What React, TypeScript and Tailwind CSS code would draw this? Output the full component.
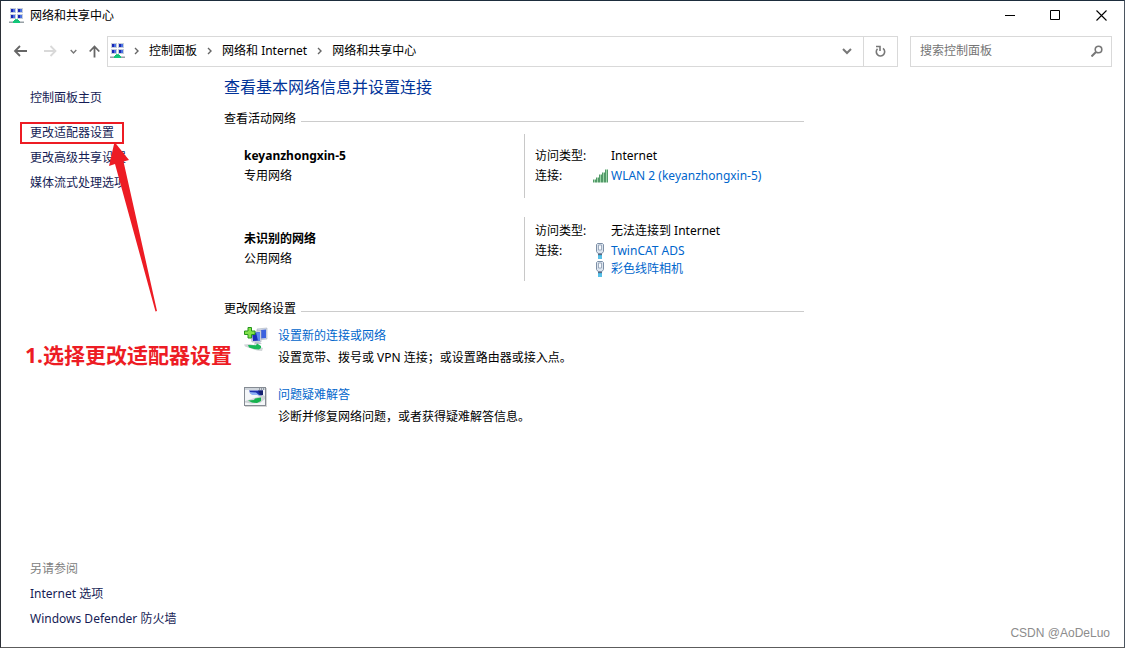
import type { ReactNode } from "react";

const NetworkIcon = () => {
  const screens = [
    [1, 0],
    [8, 0],
    [1, 6],
    [8, 6],
  ];

  return (
    <svg width="16" height="16" viewBox="0 0 16 16" className="shrink-0" shapeRendering="crispEdges">
      {screens.map(([x, y]) => (
        <g key={`${x}-${y}`}>
          <rect x={x} y={y} width="6" height="5" fill="#c6cedb" />
          <rect x={x + 1} y={y + 1} width="4" height="3" fill="#4a72e2" />
          <rect x={x + 1} y={y + 1} width="2" height="3" fill="#1a27b4" />
        </g>
      ))}
      <rect x="0" y="13" width="15" height="1" fill="#c9ced1" />
      <rect x="0" y="14" width="15" height="1" fill="#98a1a6" />
      <rect x="6" y="11" width="3" height="2" fill="#2fd48a" />
      <rect x="5" y="12" width="5" height="1" fill="#19b873" />
      <rect x="4" y="13" width="7" height="2" fill="#12c97b" />
    </svg>
  );
};

const SignalIcon = () => (
  <svg width="16" height="14" viewBox="0 0 16 14">
    <defs>
      <linearGradient id="bar" x1="0" x2="1" y1="0" y2="0">
        <stop offset="0" stopColor="#2f7a4a" />
        <stop offset="0.5" stopColor="#9ad6a6" />
        <stop offset="1" stopColor="#2f7a4a" />
      </linearGradient>
    </defs>
    {[3, 5, 8, 10, 13].map((h, i) => (
      <rect key={h} x={i * 3 + 1} y={13.5 - h} width="3" height={h} fill="url(#bar)" />
    ))}
  </svg>
);

const PlugIcon = () => (
  <svg width="10" height="16" viewBox="0 0 10 16">
    <path d="M2.500.500h5l1 1v7l-1.500 2H3l-1.500-2v-7z" fill="#dbe4ee" stroke="#7d8fa6" />
    <path d="M3.500 2h3v5h-3z" fill="#f7fafd" stroke="#8b9bb0" strokeWidth="0.8" />
    <path d="M3 11h4v1.500H3z" fill="#566a84" />
    <path d="M4 12v4M6 12v4" stroke="#2fb1e2" strokeWidth="1.6" />
  </svg>
);

const NewConnectionIcon = () => (
  <svg width="24" height="24" viewBox="0 0 24 24" className="shrink-0">
    <path d="M13 2l10-1v11l-9 1z" fill="#d3d9e3" stroke="#aab3c2" strokeWidth="0.6" />
    <path d="M17 3l5-.5v8.500l-5 .6z" fill="#3b62df" />
    <path d="M6 5l11-1.500v11.500L8 15z" fill="#d9dee8" stroke="#a4adbd" strokeWidth="0.6" />
    <path d="M8 6l8-1v8.500l-7 .6z" fill="#1b2cba" />
    <path d="M12 5.500l4-.5v8.500l-2 .2z" fill="#5b86f0" />
    <path d="M11 15h4l3 2-8 .5z" fill="#bcc3cd" />
    <path d="M0 17.500l6-.5 13 4-1 3-5-.5L1 19.500z" fill="#d1d5d8" />
    <path d="M4 18l8 .2 1-1.700 4 2.500v2l-2 1.500-5-.5-5-1.500z" fill="#18b857" />
    <path d="M4 .5h3.500V4H11v3.500H7.500V11H4V7.500H.5V4H4z" fill="#83e04a" stroke="#25961d" />
  </svg>
);

const TroubleshootIcon = () => (
  <svg width="24" height="22" viewBox="0 0 24 22" className="shrink-0">
    <rect x="1" y="2" width="22" height="19" fill="#d5d5d5" />
    <rect x="0.5" y="1.500" width="21" height="18" fill="#f4f6f8" stroke="#858b93" />
    <rect x="1" y="2" width="20" height="2" fill="#cfd5dc" />
    <path d="M15 3h1M17 3h1M19 3h1" stroke="#56606d" />
    <path d="M5 4.500h14v4.500l-3 .5-9-1.500z" fill="#1c2fae" />
    <path d="M14 4.500h5V9l-2 .5z" fill="#15206d" />
    <path d="M5 6l7 .5 3 2.500H8z" fill="#8fb0f5" />
    <path d="M1 15l8-2.500 10-3.500 2 1v3l-5 4-9 .5-6-1z" fill="#cdd3d6" />
    <path d="M4 14.500l6-.5 1-1.500 6-1v3.500l-4 2-5-.5z" fill="#15b24d" />
  </svg>
);

const CrumbArrow = () => (
  <svg width="6" height="8" viewBox="0 0 6 8" fill="none" stroke="#666" strokeWidth="1.4">
    <path d="M1 1l3 3-3 3" />
  </svg>
);

const DownArrow = ({ size }: { size: number }) => (
  <svg width={size} height={size} viewBox="0 0 10 10" fill="none" stroke="#777" strokeWidth="2">
    <path d="M1 3l4 4 4-4" />
  </svg>
);

const TitleBar = () => (
  <header className="flex h-[29px] items-center pl-2">
    <NetworkIcon />
    <h1 className="ml-[5px] flex-1">网络和共享中心</h1>
    <button aria-label="最小化" className="flex h-full w-[45px] items-center justify-center">
      <svg width="11" height="11" stroke="#000">
        <path d="M0 5.500h10" />
      </svg>
    </button>
    <button aria-label="最大化" className="flex h-full w-[45px] items-center justify-center">
      <svg width="11" height="11" fill="none" stroke="#000">
        <path d="M.5.500h9v9h-9z" />
      </svg>
    </button>
    <button aria-label="关闭" className="flex h-full w-[46px] items-center justify-center">
      <svg width="11" height="11" stroke="#000" strokeWidth="1.1">
        <path d="M.5.500l10 10M10.500.500l-10 10" />
      </svg>
    </button>
  </header>
);

const NavBar = () => (
  <nav className="flex h-[42px] items-center pr-3 pl-3">
    <button aria-label="后退" className="w-[14px]">
      <svg width="14" height="12" fill="none" stroke="#666" strokeWidth="1.8">
        <path d="M14 6H2M7 1L2 6l5 5" />
      </svg>
    </button>
    <button aria-label="前进" className="ml-4 w-[14px]">
      <svg width="14" height="12" fill="none" stroke="#d9d9d9" strokeWidth="1.8">
        <path d="M1 6h11.500M7.500 1l5 5-5 5" />
      </svg>
    </button>
    <button aria-label="最近位置" className="ml-[13px] w-[7px]">
      <DownArrow size={7} />
    </button>
    <button aria-label="向上" className="ml-3 w-[12px]">
      <svg width="12" height="13" fill="none" stroke="#666" strokeWidth="1.8">
        <path d="M5.500 12.500V2M.700 6.500l4.800-5 4.800 5" />
      </svg>
    </button>

    <div className="ml-[6px] flex h-[31px] flex-1 items-center border border-[#d9d9d9] pl-[2px]">
      <NetworkIcon />
      <ol className="ml-2 flex flex-1 items-center">
        {["控制面板", "网络和 Internet", "网络和共享中心"].map((crumb) => (
          <li key={crumb} className="mr-[10px] flex items-center gap-[9px]">
            <CrumbArrow />
            <a href="#" className="text-black">
              {crumb}
            </a>
          </li>
        ))}
      </ol>
      <button aria-label="以前的位置" className="flex h-full w-[33px] items-center justify-center">
        <DownArrow size={10} />
      </button>
      <button
        aria-label="刷新"
        className="flex h-full w-[34px] items-center justify-center border-l border-[#d9d9d9]"
      >
        <svg width="11" height="12" fill="none" stroke="#777" strokeWidth="1.6">
          <path d="M8 3.400a4.200 4.200 0 1 1-5.500.4" />
          <path d="M1 1.500h4V6" />
        </svg>
      </button>
    </div>

    <label className="ml-3 flex h-[31px] w-[202px] items-center border border-[#d9d9d9] pr-2 pl-[9px]">
      <input
        type="text"
        aria-label="搜索控制面板"
        placeholder="搜索控制面板"
        className="min-w-0 flex-1 outline-none placeholder:text-[#757575]"
      />
      <svg width="12" height="12" fill="none" stroke="#777" strokeWidth="1.6">
        <circle cx="7.500" cy="4.500" r="3.300" />
        <path d="M5 7L.5 11.500" strokeWidth="2" />
      </svg>
    </label>
  </nav>
);

const Sidebar = () => (
  <aside className="flex w-[223px] shrink-0 flex-col pt-[13px] pb-4 pl-[29px] leading-[25px] text-[#151c55]">
    <a href="#" className="mb-[10px] self-start">
      控制面板主页
    </a>
    <a href="#" className="relative self-start">
      更改适配器设置
      <span className="absolute inset-x-[-10px] top-[2px] h-[22px] border-2 border-[#ed1c24]" />
    </a>
    <a href="#" className="self-start">
      更改高级共享设置
    </a>
    <a href="#" className="self-start">
      媒体流式处理选项
    </a>
    <div className="mt-auto flex flex-col items-start">
      <span className="text-[#808080]">另请参阅</span>
      <a href="#">Internet 选项</a>
      <a href="#">Windows Defender 防火墙</a>
    </div>
  </aside>
);

const SectionTitle = ({ children }: { children: ReactNode }) => (
  <div className="flex items-center gap-[5px]">
    <h3>{children}</h3>
    <div className="mt-1 h-px flex-1 bg-[#ccc]" />
  </div>
);

type Network = {
  name: string;
  kind: string;
  access: string;
  icon: ReactNode;
  links: string[];
};

const networks: Network[] = [
  {
    name: "keyanzhongxin-5",
    kind: "专用网络",
    access: "Internet",
    icon: <SignalIcon />,
    links: ["WLAN 2 (keyanzhongxin-5)"],
  },
  {
    name: "未识别的网络",
    kind: "公用网络",
    access: "无法连接到 Internet",
    icon: <PlugIcon />,
    links: ["TwinCAT ADS", "彩色线阵相机"],
  },
];

const NetworkRow = ({ network }: { network: Network }) => (
  <div className="flex h-16 pl-5">
    <div className="w-[280px] self-center">
      <h4 className="font-bold">{network.name}</h4>
      <p>{network.kind}</p>
    </div>
    <div className="flex flex-1 items-center border-l border-[#c8c8c8] pl-[10px]">
      <dl className="grid grid-cols-[76px_1fr]">
        <dt>访问类型:</dt>
        <dd>{network.access}</dd>
        <dt>连接:</dt>
        <dd className="-ml-5">
          {network.links.map((link, i) => (
            <div key={link} className={i === 0 ? "flex h-5 items-center" : "flex h-4 items-center"}>
              <span className="flex w-5 justify-center pr-[2px]">{network.icon}</span>
              <a href="#" className="text-[#0066cc]">
                {link}
              </a>
            </div>
          ))}
        </dd>
      </dl>
    </div>
  </div>
);

const tasks = [
  {
    title: "设置新的连接或网络",
    text: "设置宽带、拨号或 VPN 连接；或设置路由器或接入点。",
    icon: <NewConnectionIcon />,
  },
  {
    title: "问题疑难解答",
    text: "诊断并修复网络问题，或者获得疑难解答信息。",
    icon: <TroubleshootIcon />,
  },
];

// Red marker arrow and caption that lie over the window
const Annotation = () => (
  <>
    <svg
      width="60"
      height="180"
      viewBox="100 140 60 180"
      className="pointer-events-none absolute top-[139px] left-[99px]"
    >
      <path d="M114.500 142l14.500 18-5.500 1.500L157 311l-1.500.5L115 164l-6 2z" fill="#ed1c24" />
    </svg>
    <p className="absolute top-[339px] left-6 text-[21px] leading-[30px] font-bold text-[#ed1c24]">
      1.选择更改适配器设置
    </p>
  </>
);

export default function App() {
  return (
    <div className="relative flex min-h-screen flex-col border border-t-[#1d2d3d] border-r-[#4b5560] border-b-[#5c5c5c] border-l-[#2b2f36] bg-white font-['Noto_Sans','Noto_Sans_CJK_SC',sans-serif] text-[12px] leading-5 text-black">
      <TitleBar />
      <NavBar />
      <div className="flex flex-1">
        <Sidebar />
        <main className="max-w-[580px] flex-1 pt-[3px]">
          <h2 className="mb-[10px] text-[16px] leading-6 text-[#003399]">查看基本网络信息并设置连接</h2>
          <SectionTitle>查看活动网络</SectionTitle>
          <div className="mt-[5px] mb-[18px] flex flex-col gap-[19px]">
            {networks.map((network) => (
              <NetworkRow key={network.name} network={network} />
            ))}
          </div>
          <SectionTitle>更改网络设置</SectionTitle>
          <ul className="mt-[6px] flex flex-col gap-[15px] pl-5 leading-[22px]">
            {tasks.map((task) => (
              <li key={task.title} className="flex gap-[10px]">
                <span className="w-6 pt-[2px]">{task.icon}</span>
                <div>
                  <a href="#" className="text-[#0066cc]">
                    {task.title}
                  </a>
                  <p>{task.text}</p>
                </div>
              </li>
            ))}
          </ul>
        </main>
      </div>
      <Annotation />
      <p className="absolute right-[14px] bottom-1 font-['Liberation_Sans',sans-serif] text-[12px] text-[#8c8c8c]">
        CSDN @AoDeLuo
      </p>
    </div>
  );
}
